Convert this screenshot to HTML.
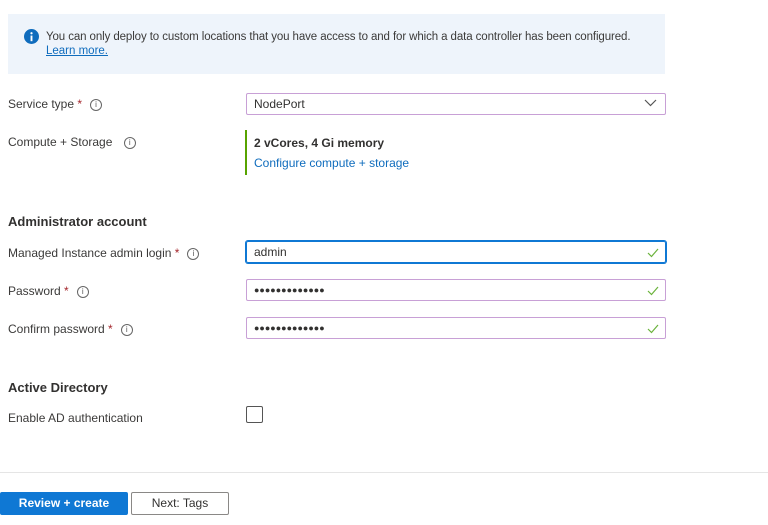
<!DOCTYPE html>
<html><head><style>
body{margin:0;width:768px;height:525px;background:#fff;font-family:"Liberation Sans",sans-serif;font-size:12px;color:#323130;position:relative;overflow:hidden}
.a{position:absolute}
.info{left:8px;top:14px;width:657px;height:60px;background:#eef4fb}
.lbl{left:8px;font-size:12px;color:#3b3a39}
.req{color:#a4262c}
.ic{display:inline-block;width:10px;height:10px;border:1px solid #666;border-radius:50%;font-size:8px;line-height:10px;text-align:center;color:#555;vertical-align:middle;margin-left:8px}
.box{left:246px;width:417px;height:20px;border:1px solid #c8a0d6;border-radius:2px;font-size:12px;line-height:20px;padding-left:7px;box-sizing:content-box}
.h{left:8px;font-size:13px;font-weight:bold;color:#323130}
.chk{right:6px;top:6px}
.dots{font-size:9px;letter-spacing:0}
</style></head><body>
<div class="a info"></div>
<svg class="a" style="left:24px;top:29px" width="15" height="15" viewBox="0 0 16 16"><circle cx="8" cy="8" r="8" fill="#0f6cbd"/><rect x="7" y="7" width="2" height="6" fill="#fff"/><circle cx="8" cy="4.5" r="1.2" fill="#fff"/></svg>
<div class="a" style="left:46px;top:31px;font-size:11.5px;letter-spacing:-0.1px;color:#3b3a39">You can only deploy to custom locations that you have access to and for which a data controller has been configured.</div>
<div class="a" style="left:46px;top:45px;font-size:11.5px;color:#0f6cbd;text-decoration:underline">Learn more.</div>

<div class="a lbl" style="top:97px">Service type <span class="req">*</span><span class="ic">i</span></div>
<div class="a box" style="top:93px;width:411px">NodePort</div>
<svg class="a" style="left:644px;top:99px" width="13" height="8" viewBox="0 0 13 8"><path d="M1 1l5.5 5.5L12 1" fill="none" stroke="#555" stroke-width="1.2"/></svg>

<div class="a lbl" style="top:135px">Compute + Storage <span class="ic">i</span></div>
<div class="a" style="left:245px;top:130px;width:2px;height:45px;background:#57a300"></div>
<div class="a" style="left:254px;top:136px;font-weight:bold;font-size:12px">2 vCores, 4 Gi memory</div>
<div class="a" style="left:254px;top:156px;color:#0f6cbd;font-size:12px">Configure compute + storage</div>

<div class="a h" style="top:214px">Administrator account</div>
<div class="a lbl" style="top:246px">Managed Instance admin login <span class="req">*</span><span class="ic">i</span></div>
<div class="a box" style="top:241px;width:411px;border-color:#0f78d4;box-shadow:0 0 0 1px #0f78d4">admin<svg class="a chk" width="12" height="10" viewBox="0 0 12 10"><path d="M1 5l3.5 3.5L11 1" fill="none" stroke="#6bb33c" stroke-width="1.2"/></svg></div>
<div class="a lbl" style="top:284px">Password <span class="req">*</span><span class="ic">i</span></div>
<div class="a box dots" style="top:279px;width:411px">●●●●●●●●●●●●●<svg class="a chk" width="12" height="10" viewBox="0 0 12 10"><path d="M1 5l3.5 3.5L11 1" fill="none" stroke="#6bb33c" stroke-width="1.2"/></svg></div>
<div class="a lbl" style="top:322px">Confirm password <span class="req">*</span><span class="ic">i</span></div>
<div class="a box dots" style="top:317px;width:411px">●●●●●●●●●●●●●<svg class="a chk" width="12" height="10" viewBox="0 0 12 10"><path d="M1 5l3.5 3.5L11 1" fill="none" stroke="#6bb33c" stroke-width="1.2"/></svg></div>

<div class="a h" style="top:380px">Active Directory</div>
<div class="a lbl" style="top:411px">Enable AD authentication</div>
<div class="a" style="left:246px;top:406px;width:15px;height:15px;border:1px solid #555;border-radius:2px"></div>

<div class="a" style="left:0;top:472px;width:768px;height:1px;background:#e5e5e5"></div>
<div class="a" style="left:0;top:492px;width:128px;height:23px;background:#0f78d4;color:#fff;font-weight:bold;text-align:center;line-height:23px;border-radius:2px">Review + create</div>
<div class="a" style="left:131px;top:492px;width:96px;height:21px;border:1px solid #8a8886;color:#323130;text-align:center;line-height:21px;border-radius:2px">Next: Tags</div>
</body></html>
